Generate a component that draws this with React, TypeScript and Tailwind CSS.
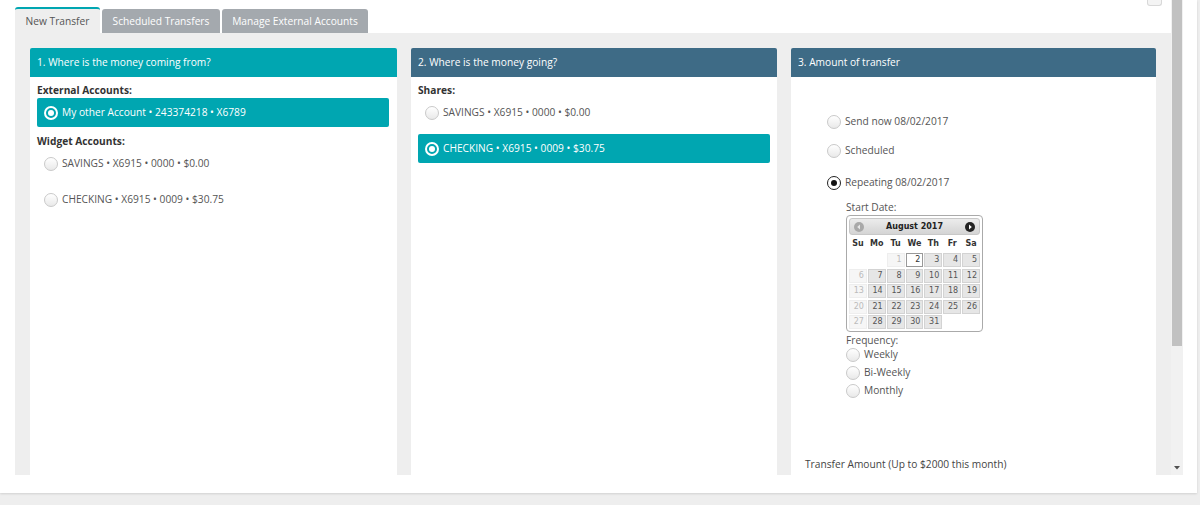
import React from "react";

type RadioKind = "off" | "onTeal" | "onDark";

const Radio = ({ kind }: { kind: RadioKind }) => {
  if (kind === "onTeal") {
    return (
      <span className="flex h-[14px] w-[14px] shrink-0 items-center justify-center rounded-full border-2 border-white">
        <span className="h-[6px] w-[6px] rounded-full bg-white" />
      </span>
    );
  }
  if (kind === "onDark") {
    return (
      <span className="flex h-[14px] w-[14px] shrink-0 items-center justify-center rounded-full border-[1.5px] border-[#222] bg-white">
        <span className="h-[6px] w-[6px] rounded-full bg-[#111]" />
      </span>
    );
  }
  return (
    <span className="h-[14px] w-[14px] shrink-0 rounded-full border border-[#c9c9c9] bg-linear-to-b from-white to-[#e9e9e9]" />
  );
};

const AccountRow = ({ text, selected }: { text: string; selected?: boolean }) => (
  <div
    className={`mb-[7px] flex h-[29px] items-center gap-[4px] rounded-[2px] pl-[7px] ${
      selected ? "bg-[#00a6b1] text-white" : "text-[#555]"
    }`}
  >
    <Radio kind={selected ? "onTeal" : "off"} />
    <span>{text}</span>
  </div>
);

const PanelHeader = ({ title, teal }: { title: string; teal?: boolean }) => (
  <div
    className={`flex h-[29px] items-center rounded-t-[2px] pl-[7px] text-white ${
      teal ? "bg-[#00a6b1]" : "bg-[#3e6b86]"
    }`}
  >
    {title}
  </div>
);

const days = ["Su", "Mo", "Tu", "We", "Th", "Fr", "Sa"];

// August 2017, starts on a Tuesday
const cells: (number | null)[] = [null, null, ...Array.from({ length: 31 }, (_, i) => i + 1)];

const Calendar = () => (
  <div className="w-[137px] rounded-[4px] border border-[#aaa] bg-white p-[2px] font-['DejaVu_Sans',sans-serif] text-[8px] text-[#333]">
    <div className="flex h-[17px] items-center justify-between rounded-[3px] border border-[#c8c8c8] bg-linear-to-b from-[#ececec] to-[#d4d4d4] px-[4px]">
      <svg width="10" height="10" viewBox="0 0 10 10">
        <circle cx="5" cy="5" r="5" fill="#a9a9a9" />
        <path d="M6 2.5 L3.2 5 L6 7.5 Z" fill="#e8e8e8" />
      </svg>
      <span className="font-bold text-[#222]">August 2017</span>
      <svg width="10" height="10" viewBox="0 0 10 10">
        <circle cx="5" cy="5" r="5" fill="#222" />
        <path d="M4 2.5 L6.8 5 L4 7.5 Z" fill="#fff" />
      </svg>
    </div>
    <div className="grid grid-cols-7 gap-x-[1px]">
      {days.map((d) => (
        <div key={d} className="flex h-[18px] items-center justify-center font-bold">
          {d}
        </div>
      ))}
    </div>
    <div className="grid grid-cols-7 gap-x-[1px] gap-y-[1.5px]">
      {cells.map((n, i) => {
        if (n === null) return <div key={i} />;
        const disabled = i % 7 === 0 || n === 1;
        const today = n === 2;
        return (
          <div
            key={i}
            className={`flex h-[14px] items-center justify-end border pr-[2px] ${
              today
                ? "border-[#999] bg-white text-[#333]"
                : disabled
                ? "border-[#eee] bg-[#f6f6f6] text-[#bbb]"
                : "border-[#d3d3d3] bg-[#e6e6e6] text-[#555]"
            }`}
          >
            {n}
          </div>
        );
      })}
    </div>
  </div>
);

const OptionLine = ({ label, kind = "off" }: { label: string; kind?: RadioKind }) => (
  <div className="flex h-[14px] items-center gap-[4px] text-[#555]">
    <Radio kind={kind} />
    <span>{label}</span>
  </div>
);

export default function App() {
  return (
    <div className="min-h-screen bg-[#eeeeee] font-['Open_Sans',sans-serif] text-[10.2px]">
      <div className="flex h-[493px] w-[1197px] bg-white shadow-[0_1px_2px_rgba(0,0,0,0.12)]">
        {/* scrolled content */}
        <div className="flex w-[1171px] flex-col">
          <div className="flex h-[7px] justify-end pr-[9px]">
            <div className="h-[6px] w-[15px] rounded-b-[3px] border border-t-0 border-[#d8d8d8] bg-[#f4f4f4]" />
          </div>

          {/* tabs */}
          <div className="flex h-[26px] items-end gap-[2px] pl-[15px]">
            <div className="flex h-[26px] w-[85px] items-center justify-center rounded-t-[3px] border-t-2 border-[#00a6b1] bg-[#eeeeee] pt-[1px] text-[#555]">
              New Transfer
            </div>
            <div className="flex h-[24px] w-[118px] items-center justify-center rounded-t-[3px] bg-[#a4a9ae] pt-[1px] text-white">
              Scheduled Transfers
            </div>
            <div className="flex h-[24px] w-[146px] items-center justify-center rounded-t-[3px] bg-[#a4a9ae] pt-[1px] text-white">
              Manage External Accounts
            </div>
          </div>

          {/* panels */}
          <div className="ml-[15px] flex h-[442px] gap-[14px] overflow-hidden bg-[#eeeeee] px-[15px] pt-[15px]">
            <div className="flex w-[367px] flex-col">
              <PanelHeader title="1. Where is the money coming from?" teal />
              <div className="flex-1 bg-white px-[7px] pr-[8px] pt-[6px]">
                <div className="h-[15px] font-bold leading-[15px] text-[#333]">External Accounts:</div>
                <AccountRow text="My other Account • 243374218 • X6789" selected />
                <div className="h-[15px] font-bold leading-[15px] text-[#333]">Widget Accounts:</div>
                <AccountRow text="SAVINGS • X6915 • 0000 • $0.00" />
                <AccountRow text="CHECKING • X6915 • 0009 • $30.75" />
              </div>
            </div>

            <div className="flex w-[366px] flex-col">
              <PanelHeader title="2. Where is the money going?" />
              <div className="flex-1 bg-white px-[7px] pt-[6px]">
                <div className="h-[15px] font-bold leading-[15px] text-[#333]">Shares:</div>
                <AccountRow text="SAVINGS • X6915 • 0000 • $0.00" />
                <AccountRow text="CHECKING • X6915 • 0009 • $30.75" selected />
              </div>
            </div>

            <div className="flex w-[365px] flex-col">
              <PanelHeader title="3. Amount of transfer" />
              <div className="flex flex-1 flex-col bg-white pl-[14px] pt-[38px]">
                <div className="flex flex-col gap-[15px] pl-[22px]">
                  <OptionLine label="Send now 08/02/2017" />
                  <div className="flex flex-col gap-[18px]">
                    <OptionLine label="Scheduled" />
                    <OptionLine label="Repeating 08/02/2017" kind="onDark" />
                  </div>
                </div>
                <div className="mt-[10px] pl-[41px]">
                  <div className="h-[15px] leading-[15px] text-[#555]">Start Date:</div>
                  <Calendar />
                  <div className="mt-[1px] h-[15px] leading-[15px] text-[#555]">Frequency:</div>
                  <div className="flex flex-col gap-[4px]">
                    <OptionLine label="Weekly" />
                    <OptionLine label="Bi-Weekly" />
                    <OptionLine label="Monthly" />
                  </div>
                </div>
                <div className="mt-[59px] h-[14px] leading-[14px] text-[#444]">
                  Transfer Amount (Up to $2000 this month)
                </div>
              </div>
            </div>
          </div>
        </div>

        {/* scrollbar */}
        <div className="flex h-[475px] w-[12px] flex-col bg-[#f1f1f1] px-[1px]">
          <div className="h-[346px] bg-[#c1c1c1]" />
          <div className="flex-1" />
          <div className="flex h-[14px] items-center justify-center">
            <svg width="6" height="4" viewBox="0 0 6 4">
              <path d="M0 0 L6 0 L3 3.5 Z" fill="#505050" />
            </svg>
          </div>
        </div>
      </div>
    </div>
  );
}
